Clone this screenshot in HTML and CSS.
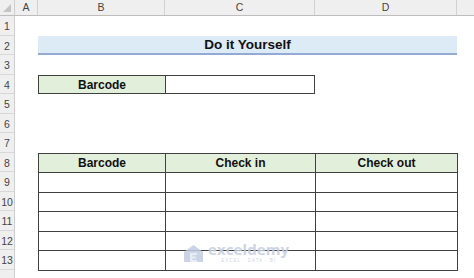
FILE: index.html
```html
<!DOCTYPE html>
<html>
<head>
	<title>Do it Yourself</title>
	<link rel="stylesheet" href="styles.css">
</head>
<body>
<div class="sheet">
	<div class="corner"><span class="tri"></span></div>
	<div class="colheads">
		<div class="ch col-a">A</div>
		<div class="ch col-b">B</div>
		<div class="ch col-c">C</div>
		<div class="ch col-d">D</div>
		<div class="ch col-e"></div>
	</div>
	<div class="rowheads">
		<div class="rh">1</div>
		<div class="rh">2</div>
		<div class="rh">3</div>
		<div class="rh">4</div>
		<div class="rh">5</div>
		<div class="rh">6</div>
		<div class="rh">7</div>
		<div class="rh">8</div>
		<div class="rh">9</div>
		<div class="rh">10</div>
		<div class="rh">11</div>
		<div class="rh">12</div>
		<div class="rh">13</div>
		<div class="rh"></div>
	</div>
	<div class="cells">
		<div class="title">Do it Yourself</div>
		<div class="label">Barcode</div>
		<div class="input"></div>
		<table class="log">
			<colgroup>
				<col class="w-b">
				<col class="w-c">
				<col class="w-d">
			</colgroup>
			<tr class="head">
				<td>Barcode</td>
				<td>Check in</td>
				<td>Check out</td>
			</tr>
			<tr><td></td><td></td><td></td></tr>
			<tr><td></td><td></td><td></td></tr>
			<tr><td></td><td></td><td></td></tr>
			<tr><td></td><td></td><td></td></tr>
			<tr><td></td><td></td><td></td></tr>
		</table>
		<div class="watermark">
			<svg class="logo" width="21" height="19" viewBox="0 0 21 19">
				<path d="M10.5 1 L20 8 L20 18 L1 18 L1 8 Z" fill="#c3cde0"/>
				<path d="M7 9 L14 9 L14 11 L9.5 11 L9.5 12.5 L13 12.5 L13 14.5 L9.5 14.5 L9.5 16 L14 16 L14 18 L7 18 Z" fill="#e4e9f2"/>
			</svg>
			<div class="brand">
				<span class="name">exceldemy</span>
				<span class="tag">EXCEL · DATA · BI</span>
			</div>
		</div>
	</div>
</div>
</body>
</html>
```

FILE: styles.css
```css
* {
	padding: 0px;
	margin: 0px;
	box-sizing: border-box;
}
body {
	background: #fff;
	font-family: "Liberation Sans", Arial, sans-serif;
	overflow: hidden;
}

.sheet {
	display: grid;
	grid-template-columns: 15px 1fr;
	grid-template-rows: 16px 1fr;
	width: 474px;
	height: 278px;
}

.corner {
	position: relative;
	background: #efefef;
	border-right: 1px solid #cfcfcf;
	border-bottom: 1px solid #bdbdbd;
}
.corner .tri {
	position: absolute;
	right: 3px;
	bottom: 3px;
	width: 0;
	height: 0;
	border-left: 8px solid transparent;
	border-bottom: 8px solid #c4c4c4;
}

.colheads {
	display: flex;
	background: #efefef;
	border-bottom: 1px solid #bdbdbd;
}
.ch {
	border-right: 1px solid #d2d2d2;
	font-size: 10.5px;
	color: #444;
	text-align: center;
	line-height: 15px;
}
.col-a { width: 23px; }
.col-b { width: 127px; }
.col-c { width: 150px; }
.col-d { width: 142px; }
.col-e { flex: 1; border-right: none; }

.rowheads {
	display: flex;
	flex-direction: column;
	background: #efefef;
	border-right: 1px solid #cfcfcf;
}
.rh {
	height: 19.5px;
	flex: none;
	border-bottom: 1px solid #d8d8d8;
	font-size: 10.5px;
	color: #444;
	text-align: center;
	line-height: 20px;
}

.cells {
	position: relative;
	display: grid;
	grid-template-columns: 23px 127px 150px 142px 1fr;
	grid-template-rows: repeat(13, 19.5px) 1fr;
}

.title {
	grid-column: 2 / 5;
	grid-row: 2;
	background: #ddebf7;
	border-bottom: 2px solid #93aad6;
	font-size: 13.5px;
	font-weight: bold;
	color: #111;
	text-align: center;
	line-height: 18px;
}

.label {
	grid-column: 2;
	grid-row: 4;
	background: #e2efda;
	border: 1px solid #404040;
	border-right: none;
	font-size: 12px;
	font-weight: bold;
	color: #111;
	text-align: center;
	line-height: 18px;
}
.input {
	grid-column: 3;
	grid-row: 4;
	border: 1px solid #404040;
}

.log {
	grid-column: 2 / 5;
	grid-row: 8 / 14;
	width: 100%;
	height: 100%;
	border-collapse: collapse;
	table-layout: fixed;
}
.log .w-b { width: 127px; }
.log .w-c { width: 150px; }
.log .w-d { width: 142px; }
.log td {
	border: 1px solid #404040;
	height: 19.5px;
	padding: 0;
	font-size: 12px;
	font-weight: bold;
	color: #111;
	text-align: center;
}
.log .head td {
	background: #e2efda;
}

.watermark {
	position: absolute;
	left: 168px;
	top: 227px;
	display: flex;
	align-items: center;
	gap: 4px;
	opacity: 0.85;
}
.brand {
	display: flex;
	flex-direction: column;
	align-items: center;
	gap: 2px;
}
.brand .name {
	font-family: "Open Sans", sans-serif;
	font-weight: bold;
	font-size: 15px;
	line-height: 13px;
	color: #c5cee0;
	letter-spacing: 0.1px;
}
.brand .tag {
	font-size: 4.5px;
	line-height: 5px;
	color: #c8d0df;
	letter-spacing: 1px;
}
```
